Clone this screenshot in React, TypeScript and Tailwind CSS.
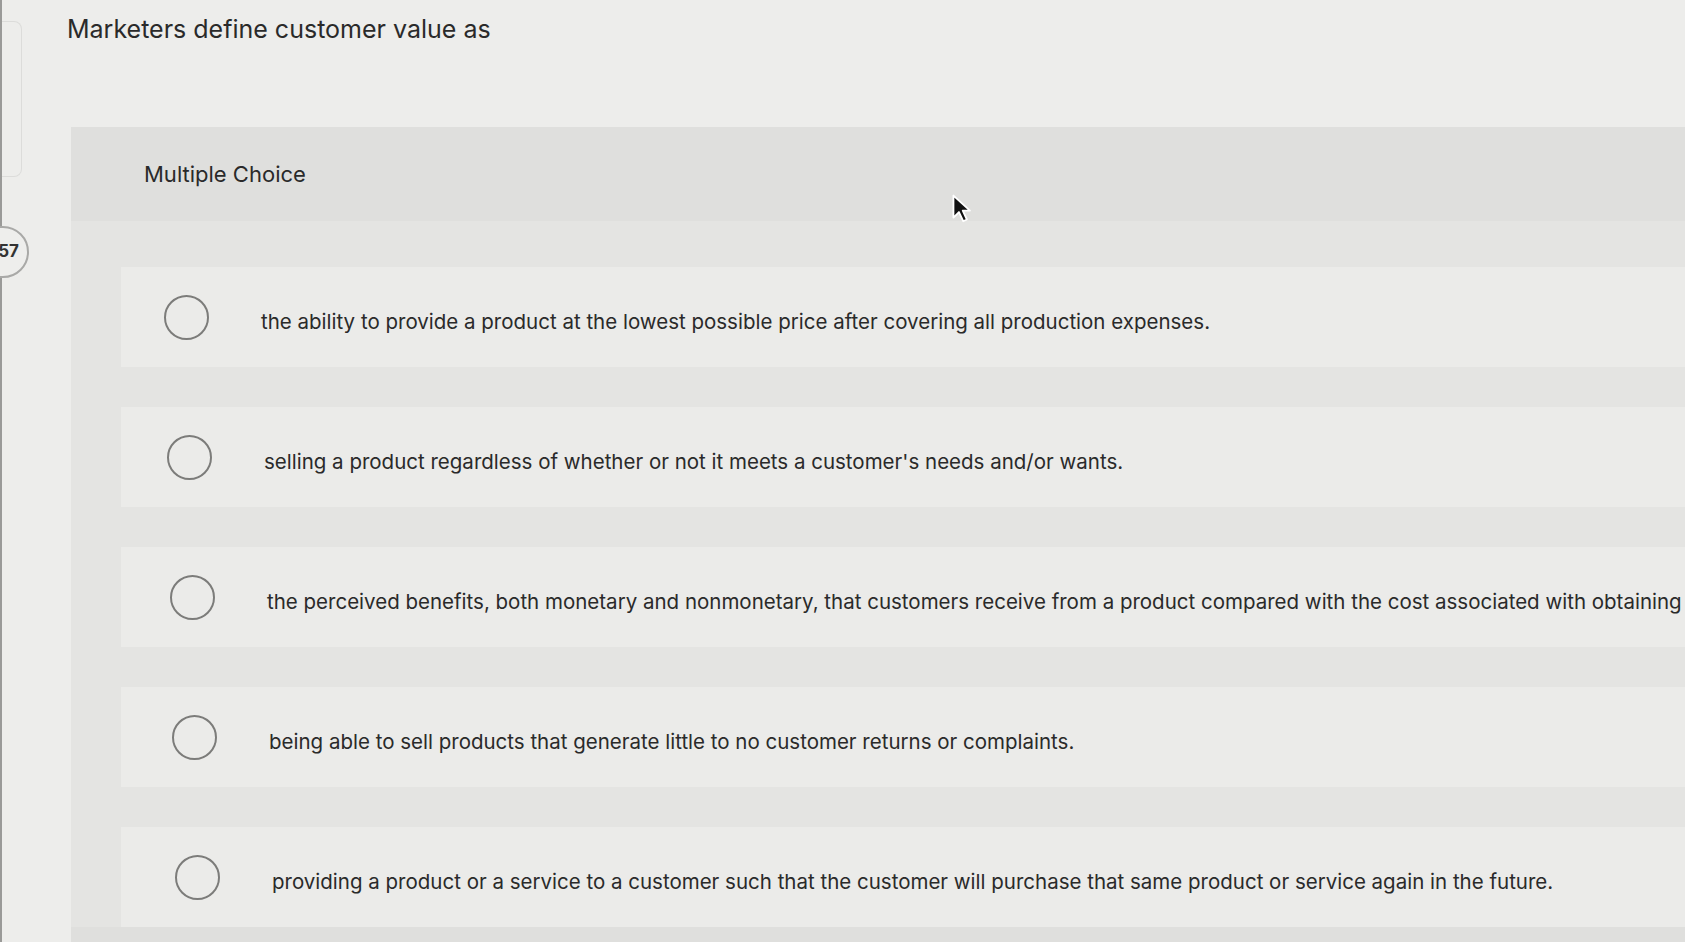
import React from 'react'

const options = [
  { text: 'the ability to provide a product at the lowest possible price after covering all production expenses.', indent: 'ml-[43px]' },
  { text: "selling a product regardless of whether or not it meets a customer's needs and/or wants.", indent: 'ml-[46px]' },
  { text: 'the perceived benefits, both monetary and nonmonetary, that customers receive from a product compared with the cost associated with obtaining it.', indent: 'ml-[49px]' },
  { text: 'being able to sell products that generate little to no customer returns or complaints.', indent: 'ml-[51px]' },
  { text: 'providing a product or a service to a customer such that the customer will purchase that same product or service again in the future.', indent: 'ml-[54px]' },
]

function Cursor() {
  return (
    <svg className="absolute left-[951px] top-[193px]" width="22" height="32" viewBox="0 0 18 26">
      <path d="M2 2 L2 20 L6.5 15.5 L10 23 L13 21.6 L9.6 14.3 L15.5 14.3 Z" fill="#111" stroke="#fff" strokeWidth="1.5" strokeLinejoin="round" />
    </svg>
  )
}

export default function App() {
  return (
    <div
      className="relative w-[1685px] h-[942px] overflow-hidden bg-[#ededeb] flex text-[#2a2a2a]"
      style={{ fontFamily: 'Inter, "Liberation Sans", sans-serif' }}
    >
      {/* left rail, mostly cut off */}
      <div className="w-[62px] shrink-0 border-l-2 border-[#9a9a98] flex flex-col">
        <div className="mt-[21px] w-[20px] h-[156px] rounded-r-lg border border-l-0 border-[#dcdcda]" />
        <div className="mt-[49px] -ml-[27px] w-[54px] h-[52px] rounded-full border-2 border-[#a9a9a7] bg-[#eeeeec] flex items-center justify-end pr-[8px]">
          <span className="text-[17px] font-bold text-[#333]">57</span>
        </div>
      </div>

      <div className="flex-1 flex flex-col">
        <h1 className="pl-[5px] pt-[13px] text-[25px] leading-[32px] font-normal">Marketers define customer value as</h1>

        <div className="ml-[9px] mt-[82px] flex-1 bg-[#dfdfdd]">
          <div className="h-[94px] pl-[73px] flex items-center">
            <span className="text-[22px] text-[#2a2a2a]">Multiple Choice</span>
          </div>
          <div className="bg-[#e4e4e2] pl-[50px] pt-[46px] flex flex-col gap-[40px]">
            {options.map((o) => (
              <div key={o.text} className="h-[100px] bg-[#ebebe9] flex items-center whitespace-nowrap overflow-hidden">
                <div className={`${o.indent} w-[45px] h-[45px] shrink-0 rounded-full border-2 border-[#7c7c7a]`} />
                <span className="ml-[52px] mt-[10px] text-[20.5px] text-[#2a2a2a]">{o.text}</span>
              </div>
            ))}
          </div>
        </div>
      </div>

      <Cursor />
    </div>
  )
}
